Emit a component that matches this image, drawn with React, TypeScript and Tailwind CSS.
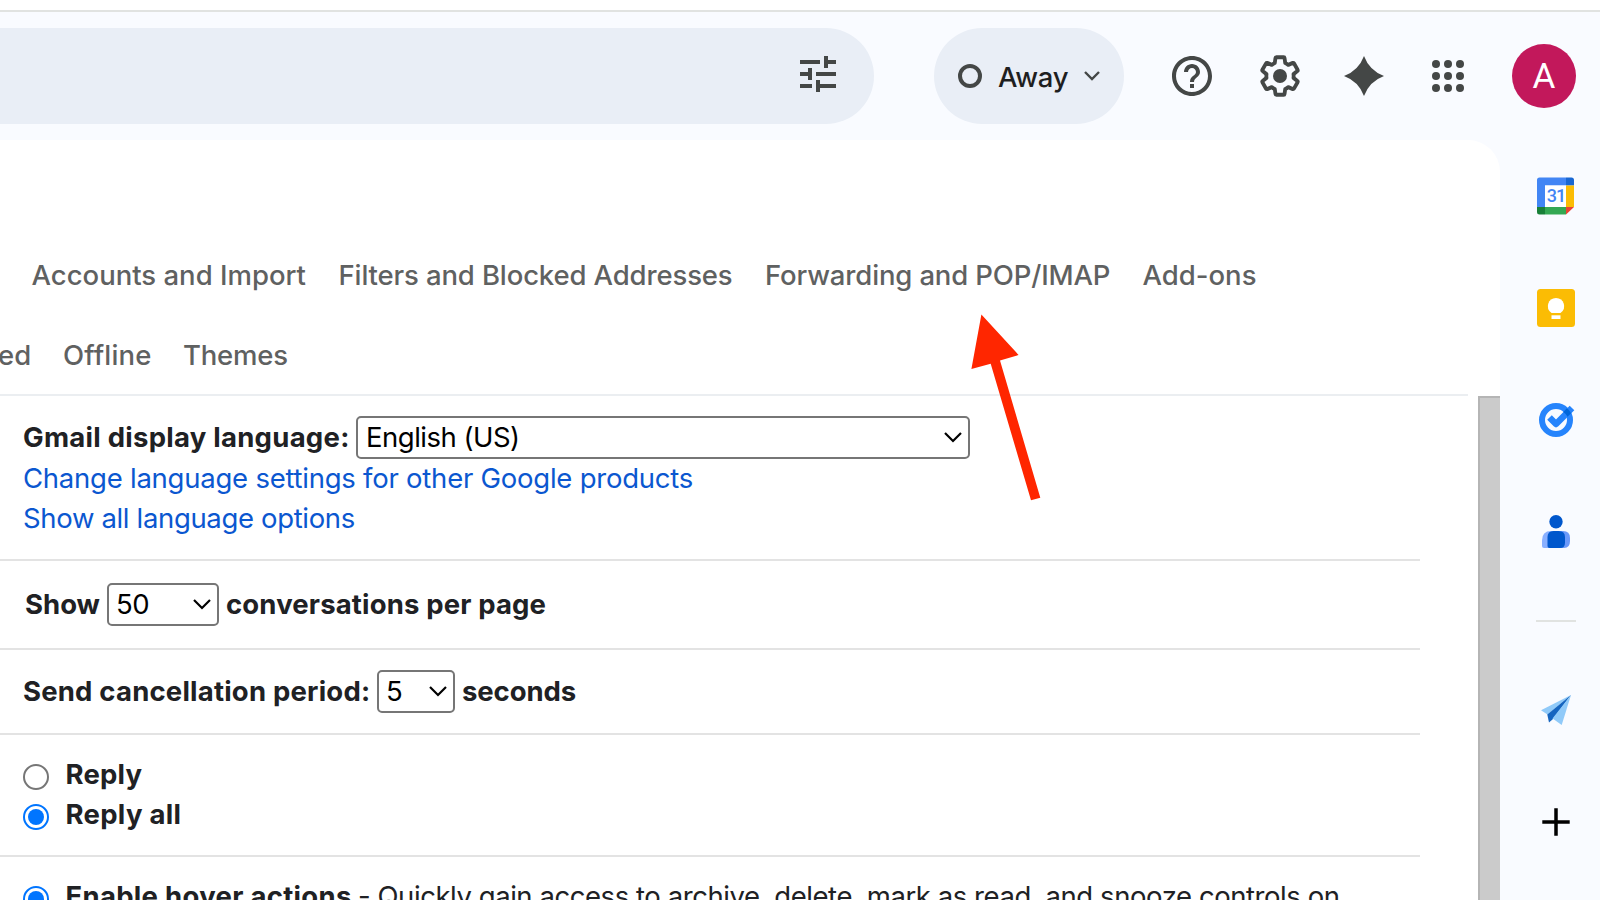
import type { ReactNode } from 'react';

const GEAR =
  'M19.43 12.98c.04-.32.07-.64.07-.98 0-.34-.03-.66-.07-.98l2.11-1.65c.19-.15.24-.42.12-.64l-2-3.46c-.09-.16-.26-.25-.44-.25-.06 0-.12.01-.17.03l-2.49 1c-.52-.4-1.08-.73-1.69-.98l-.38-2.65C14.46 2.18 14.25 2 14 2h-4c-.25 0-.46.18-.49.42l-.38 2.65c-.61.25-1.17.59-1.69.98l-2.49-1c-.06-.02-.12-.03-.18-.03-.17 0-.34.09-.43.25l-2 3.46c-.13.22-.07.49.12.64l2.11 1.65c-.04.32-.07.65-.07.98 0 .33.03.66.07.98l-2.11 1.65c-.19.15-.24.42-.12.64l2 3.46c.09.16.26.25.44.25.06 0 .12-.01.17-.03l2.49-1c.52.4 1.08.73 1.69.98l.38 2.65c.03.24.24.42.49.42h4c.25 0 .46-.18.49-.42l.38-2.65c.61-.25 1.17-.59 1.69-.98l2.49 1c.06.02.12.03.18.03.17 0 .34-.09.43-.25l2-3.46c.12-.22.07-.49-.12-.64l-2.11-1.65z';

function Icon({ className, children }: { className?: string; children: ReactNode }) {
  return (
    <svg viewBox="0 0 24 24" className={`size-12 shrink-0 fill-[#444746] ${className ?? ''}`}>
      {children}
    </svg>
  );
}

function Header() {
  return (
    <header className="flex h-[128px] items-center">
      <div className="flex h-24 w-[874px] shrink-0 items-center justify-end rounded-r-full bg-[#e9eef6] pr-8">
        <Icon className="-mt-1">
          <path d="M3 17v2h6v-2H3zM3 5v2h10V5H3zm10 16v-2h8v-2h-8v-2h-2v6h2zM7 9v2H3v2h4v2h2V9H7zm14 4v-2H11v2h10zm-6-4h2V7h4V5h-4V3h-2v6z" />
        </Icon>
      </div>
      <div className="ml-[60px] flex h-24 w-[190px] shrink-0 items-center rounded-full bg-[#e9eef6] pl-6">
        <span className="size-6 shrink-0 rounded-full border-4 border-[#444746]" />
        <span className="ml-4 mt-[2px] w-[72px] text-[27.5px] font-medium tracking-[-0.3px] text-[#1f1f1f]">Away</span>
        <svg viewBox="0 0 16 10" className="ml-[14px] h-[10px] w-4 shrink-0 fill-none stroke-[#444746]" strokeWidth="2.4">
          <path d="M1 1l7 7 7-7" />
        </svg>
      </div>
      <Icon className="ml-11">
        <path d="M11 18h2v-2h-2v2zm1-16C6.480 2 2 6.480 2 12s4.480 10 10 10 10-4.480 10-10S17.520 2 12 2zm0 18c-4.410 0-8-3.590-8-8s3.590-8 8-8 8 3.590 8 8-3.590 8-8 8zm0-14c-2.210 0-4 1.790-4 4h2c0-1.100.9-2 2-2s2 .9 2 2c0 2-3 1.750-3 5h2c0-2.250 3-2.500 3-5 0-2.210-1.790-4-4-4z" />
      </Icon>
      <Icon className="ml-10">
        <g transform="translate(12 12) scale(.91 .94) translate(-12 -12)">
          <path d={GEAR} className="fill-none stroke-[#444746]" strokeWidth="2.1" strokeLinejoin="round" />
        </g>
        <circle cx="12" cy="12" r="3.5" />
      </Icon>
      <Icon className="ml-9">
        <path d="M12 2Q14.700 9.300 22 12Q14.700 14.700 12 22Q9.300 14.700 2 12Q9.300 9.300 12 2z" />
      </Icon>
      <Icon className="ml-9">
        {[6, 12, 18].map((y) => [6, 12, 18].map((x) => <circle key={`${x}-${y}`} cx={x} cy={y} r="2" />))}
      </Icon>
      <div className="ml-10 flex size-16 shrink-0 items-center justify-center rounded-full bg-[#c2185b] font-[Roboto] text-[35px] text-white">
        <span className="mt-[2px]">A</span>
      </div>
    </header>
  );
}

function Select({ value, className }: { value: string; className: string }) {
  return (
    <div className={`flex h-[43px] shrink-0 justify-between rounded-[5px] border-2 border-[#767676] bg-white pr-[6px] text-black ${className}`}>
      <span className="-mt-px tracking-[-0.5px]">{value}</span>
      <svg viewBox="0 0 18 11" className="mt-[14px] h-[11px] w-[18px] fill-none stroke-black" strokeWidth="2.2">
        <path d="M1 1l8 8 8-8" />
      </svg>
    </div>
  );
}

function Radio({ checked }: { checked?: boolean }) {
  return checked ? (
    <span className="mt-[10px] flex size-[26px] shrink-0 items-center justify-center rounded-full border-2 border-[#0075ff]">
      <span className="size-4 rounded-full bg-[#0075ff]" />
    </span>
  ) : (
    <span className="mt-[10px] size-[26px] shrink-0 rounded-full border-2 border-[#767676]" />
  );
}

function Row({ className, children }: { className: string; children: ReactNode }) {
  return <section className={`w-[1420px] shrink-0 border-b-2 border-[#e3e3e3] ${className}`}>{children}</section>;
}

function Tabs() {
  return (
    <nav className="h-[256px] w-[1468px] shrink-0 border-b-2 border-[#ebeef1] pt-[115px] font-medium text-[#5f6161]">
      <div className="flex pl-[31.5px]">
        <a className="w-[307px] shrink-0">Accounts and Import</a>
        <a className="w-[426.5px] shrink-0 tracking-[-0.13px]">Filters and Blocked Addresses</a>
        <a className="w-[377.5px] shrink-0 tracking-[-0.15px]">Forwarding and POP/IMAP</a>
        <a className="shrink-0">Add-ons</a>
      </div>
      <div className="mt-10 flex">
        <a className="-ml-[2px] w-[65px] shrink-0">ed</a>
        <a className="w-[120px] shrink-0 tracking-[0.15px]">Offline</a>
        <a className="shrink-0 tracking-[-0.2px]">Themes</a>
      </div>
    </nav>
  );
}

function Settings() {
  return (
    <div className="flex min-h-0 flex-1 text-[#202124]">
      <div className="flex w-[1478px] shrink-0 flex-col overflow-hidden">
        <Row className="h-[165px] pl-[23px] pt-5">
          <div className="flex h-[42px]">
            <b className="mt-px w-[333px] shrink-0 font-bold tracking-[0.26px]">Gmail display language:</b>
            <Select value="English (US)" className="w-[614px] pl-2" />
          </div>
          <div className="tracking-[-0.24px] text-[#0b57d0]">Change language settings for other Google products</div>
          <div className="tracking-[-0.34px] text-[#0b57d0]">Show all language options</div>
        </Row>
        <Row className="flex h-[89px] pl-[25px] pt-[22px]">
          <b className="mt-px w-[82px] shrink-0">Show</b>
          <Select value="50" className="w-[112px] pl-[7px]" />
          <b className="ml-[7px] mt-px tracking-[0.15px]">conversations per page</b>
        </Row>
        <Row className="flex h-[85px] pl-[23px] pt-5">
          <b className="mt-px w-[354px] shrink-0 tracking-[0.2px]">Send cancellation period:</b>
          <Select value="5" className="w-[78px] pl-[7px]" />
          <b className="ml-[7px] mt-px tracking-[-0.1px]">seconds</b>
        </Row>
        <Row className="h-[122px] pl-[23px] pt-[19px]">
          <div className="flex h-10">
            <Radio />
            <b className="ml-[16.5px] tracking-[0.2px]">Reply</b>
          </div>
          <div className="flex h-10">
            <Radio checked />
            <b className="ml-[16.5px] tracking-[0.3px]">Reply all</b>
          </div>
        </Row>
        <section className="flex h-[64px] shrink-0 pl-[23px] pt-[19px]">
          <Radio checked />
          <b className="ml-[16.5px] w-[292.5px] shrink-0 tracking-[0.3px]">Enable hover actions</b>
          <span className="w-[19.5px] shrink-0">-</span>
          <span className="tracking-[-0.44px]">
            Quickly gain access to archive, delete, mark as read, and snooze controls on
          </span>
        </section>
      </div>
      <div className="w-[22px] shrink-0 border-l-2 border-t-2 border-[#b5b5b5] bg-[#cbcbcb]" />
    </div>
  );
}

function SidePanel() {
  return (
    <svg viewBox="1500 140 100 760" className="h-[760px] w-[100px] shrink-0">
      {/* Calendar */}
      <path d="M1539.500 177.500H1566v8h-21v21.500h-8v-27a2.500 2.500 0 0 1 2.500-2.500z" fill="#4285f4" />
      <path d="M1566 177.500h5.500a2.500 2.500 0 0 1 2.500 2.500v5.500h-8z" fill="#1967d2" />
      <path d="M1566 185.500h8V207h-8z" fill="#fbbc04" />
      <path d="M1545 207h21v7.500h-21z" fill="#34a853" />
      <path d="M1537 207h8v7.500h-5.500a2.500 2.500 0 0 1-2.500-2.500z" fill="#188038" />
      <path d="M1566 207h8l-8 7.500z" fill="#ea4335" />
      <path d="M1545 185.500h21V207h-21z" fill="#fff" />
      <text x="1556" y="202.300" textAnchor="middle" fontFamily="Roboto, sans-serif" fontSize="18" fontWeight="500" letterSpacing="-1" fill="#4285f4">31</text>
      {/* Keep */}
      <rect x="1537" y="289" width="38" height="38" rx="3.500" fill="#fbbc04" />
      <path d="M1556 298a8.200 8.200 0 0 1 4.500 15h-9a8.200 8.200 0 0 1 4.500-15z" fill="#fff" />
      <path d="M1551.500 315.300h9v3.700h-9z" fill="#fff" />
      {/* Tasks */}
      <circle cx="1556" cy="420" r="14" fill="none" stroke="#2684fc" strokeWidth="6" />
      <path d="M1549.500 417.500l6.500 6.500 16-16" fill="none" stroke="#2684fc" strokeWidth="6.500" strokeLinejoin="round" />
      <path d="M1563.300 412l3.600-3.700q2.800 1.700 4.200 5l-3.600 3.400q-1.500-3-4.200-4.700z" fill="#0066da" />
      {/* Contacts */}
      <circle cx="1556" cy="521.700" r="6.700" fill="#0057cc" />
      <path d="M1551 531h11.500v17H1544q-2 0-2-2v-5.500q0-9.500 9-9.500z" fill="#8ab0ff" />
      <path d="M1557 531h6q7 0 7 7v3q0 7-6 7h-7z" fill="#6b99fa" />
      <path d="M1553.500 531h5q6.500 0 6.500 6v5.500q0 5.500-5 5.500h-10.500q-2 0-2-2V537q0-6 6-6z" fill="#0057cc" />
      <path d="M1536 620h40v2h-40z" fill="#e1e3e1" />
      {/* Send */}
      <path d="M1571 695l-30 15.200 6.500 4.300z" fill="#90caf9" />
      <path d="M1571 695l-23.700 19.500 1.700 8 4-3.500z" fill="#1565c0" />
      <path d="M1571 695l-9.300 30-9.200-6.500z" fill="#90caf9" />
      {/* Add */}
      <path d="M1542.300 822h27.400M1556 808.300v27.400" stroke="#000" strokeWidth="3.500" />
    </svg>
  );
}

export default function App() {
  return (
    <div className="relative flex h-[900px] w-[1600px] flex-col overflow-hidden whitespace-nowrap bg-[#f9fbff] font-[Inter,sans-serif] text-[27.5px] leading-[40px]">
      <div className="h-3 shrink-0 border-b-2 border-[#e1e3e1] bg-white" />
      <Header />
      <div className="flex min-h-0 flex-1">
        <main className="flex h-[760px] w-[1500px] shrink-0 flex-col overflow-hidden rounded-tr-[32px] bg-white">
          <Tabs />
          <Settings />
        </main>
        <SidePanel />
      </div>
      <svg viewBox="960 310 90 200" className="pointer-events-none absolute left-[960px] top-[310px] h-[200px] w-[90px]">
        <path d="M981.400 314.500L1018.600 355l-18.600 5.500 40.300 137.200-9.300 2.500-40.300-136.500-19.300 5.300z" fill="#ff2600" />
      </svg>
    </div>
  );
}
